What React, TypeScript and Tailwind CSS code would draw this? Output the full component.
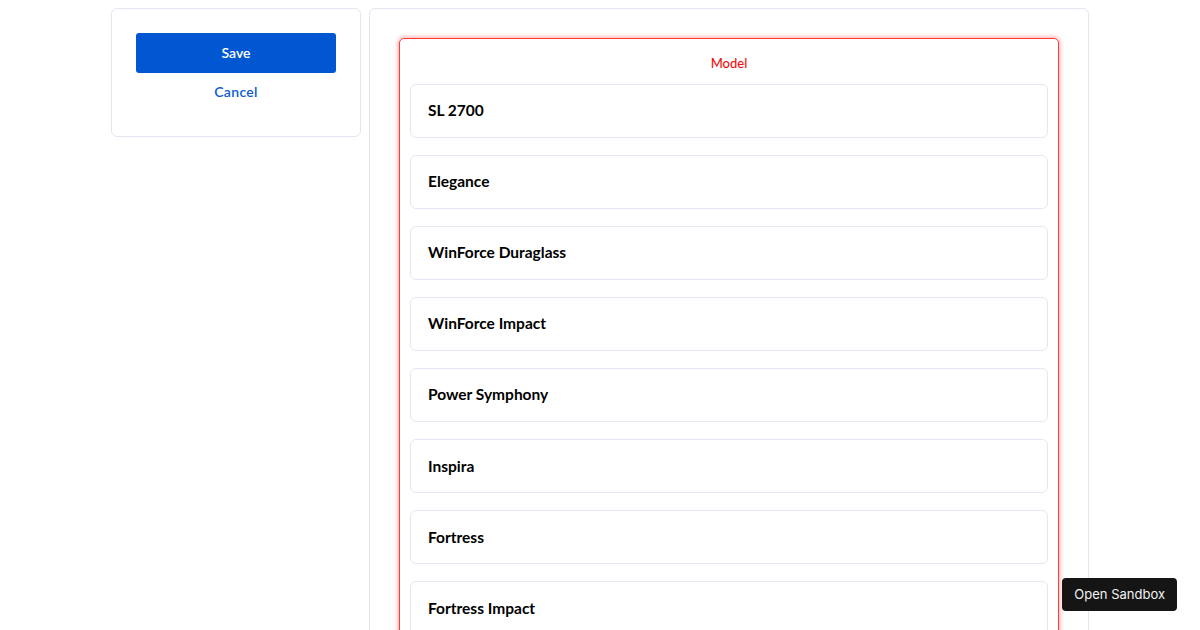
import React from "react";

const models = [
  "SL 2700",
  "Elegance",
  "WinForce Duraglass",
  "WinForce Impact",
  "Power Symphony",
  "Inspira",
  "Fortress",
  "Fortress Impact",
  "Classic",
];

const App: React.FC = () => {
  return (
    <div className="min-h-screen bg-white font-['Lato','Liberation_Sans',sans-serif] text-black">
      <div className="mx-auto flex w-[978px] items-start gap-2 pt-2">
        {/* left: actions */}
        <div className="flex w-[250px] shrink-0 flex-col items-center rounded-md border border-[#e4e7f0] px-6 pt-6 pb-[34px]">
          <button className="h-10 w-full rounded-[3px] bg-[#0057d1] text-sm font-semibold text-white">
            Save
          </button>
          <button className="mt-[9px] text-sm font-semibold tracking-wide text-[#0b5ccf]">
            Cancel
          </button>
        </div>

        {/* right: model picker */}
        <div className="flex-1 rounded-md border border-[#e4e7f0] p-[29px]">
          <div className="rounded-[5px] border border-[#ff3b3b] px-[10px] shadow-[0_0_4px_1px_rgba(255,60,60,0.45)]">
            <div className="pt-[15px] pb-[10px] text-center text-[13px] font-medium text-[#f00f0f]">
              Model
            </div>
            <div className="flex flex-col gap-[17.15px]">
              {models.map((m) => (
                <div
                  key={m}
                  className="flex h-[54px] items-center rounded-md border border-[#e4e7f0] px-[17px] text-[15.5px] font-bold"
                >
                  {m}
                </div>
              ))}
            </div>
          </div>
        </div>
      </div>

      <button className="fixed right-[23px] bottom-[19px] rounded-[4px] bg-[#151515] px-3 py-[7px] text-[13px] text-[#f2f2f2] font-['Inter',sans-serif]">
        Open Sandbox
      </button>
    </div>
  );
};

export default App;
